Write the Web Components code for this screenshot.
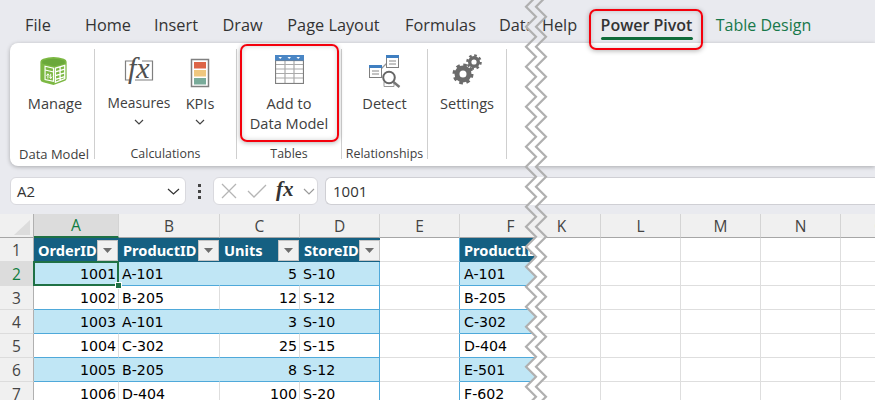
<!DOCTYPE html>
<html lang="en">
<head>
<meta charset="utf-8">
<title>Power Pivot</title>
<style>
  html, body { margin: 0; height: 400px; overflow: hidden; background: #e9eaef; }
  body { position: relative; font-family: "Open Sans", "Liberation Sans", sans-serif; color: #333; }
</style>
</head>
<body>
<xl-tabs>
  <xl-tab w="60">File</xl-tab>
  <xl-tab w="80">Home</xl-tab>
  <xl-tab w="56">Insert</xl-tab>
  <xl-tab w="77">Draw</xl-tab>
  <xl-tab w="105">Page Layout</xl-tab>
  <xl-tab w="109">Formulas</xl-tab>
  <xl-tab w="34" clip>Data</xl-tab>
  <xl-tab w="61">Help</xl-tab>
  <xl-tab w="113" active>Power Pivot<xl-callout style="--t:9px;--r:0;--b:-7px;--l:-1px"></xl-callout></xl-tab>
  <xl-tab w="121" contextual>Table Design</xl-tab>
</xl-tabs>

<xl-ribbon>
  <xl-group label="Data Model" w="85" style="--pad:5px;--label-pad:4px;--label-size:13px">
    <xl-button w="80" style="--icon-shift:-3px;--icon-pb:7px">
      <svg slot="icon" width="29" height="30" viewBox="0 0 30 32">
        <path d="M1 6 Q1 4 4 3 Q15 -1 26 3 Q29 4 29 6 V24 Q29 26 26 27 L15 31 L4 28 Q1 27 1 25 Z" fill="#7cb843"/>
        <path d="M3 8 L16 11 L27 8 V5 Q15 1 3 5 Z" fill="#6aa83a"/>
        <path d="M6 11 L15 13 V27 L6 25 Z" fill="none" stroke="#fff" stroke-width="1.2"/>
        <path d="M6 15 L15 17" stroke="#fff" stroke-width="1.2"/>
        <path d="M9 24 V19 M9 19 l-1.5 2 M9 19 l1.5 2 M12 19 V24 M12 24 l-1.5 -2 M12 24 l1.5 -2" fill="none" stroke="#fff" stroke-width="1"/>
        <path d="M17 13 L27 10 V24 L17 28 Z M17 17 L27 14 M17 21 L27 18 M17 25 L27 22 M22 12 V26" fill="none" stroke="#fff" stroke-width="1.4"/>
      </svg>
      Manage
    </xl-button>
  </xl-group>
  <xl-group label="Calculations" w="142">
    <xl-button w="88" chevron style="--btn-size:13.8px">
      <svg slot="icon" width="36" height="34" viewBox="0 0 36 34" overflow="visible">
        <path d="M14 7 H4.5 V26 H9 M21 7 H31.5 V26 H14" fill="none" stroke="#7f7f7f" stroke-width="1.2"/>
        <text x="7" y="24" font-family="Liberation Serif, serif" font-style="italic" font-size="30" fill="#505050">fx</text>
      </svg>
      Measures
    </xl-button>
    <xl-button w="34" chevron>
      <svg slot="icon" width="20" height="30" viewBox="0 0 20 30">
        <rect x="1.5" y="1.5" width="17" height="27" fill="#fff" stroke="#808080" stroke-width="1.5"/>
        <rect x="4" y="4" width="12" height="6.5" fill="#dd6548"/>
        <rect x="4" y="12" width="12" height="6.5" fill="#efc77f"/>
        <rect x="4" y="20" width="12" height="6.5" fill="#79ab9a"/>
      </svg>
      KPIs
    </xl-button>
  </xl-group>
  <xl-group label="Tables" w="105">
    <xl-button w="104" style="--icon-pb:9px">
      <svg slot="icon" width="29" height="29" viewBox="0 0 29 29">
        <rect x=".5" y=".5" width="28" height="28" fill="#fff"/>
        <path d="M1 9.5 H28 M1 14 H28 M1 18.5 H28 M1 23 H28 M10 5 V28 M19 5 V28" stroke="#aaa" stroke-width="1.2" fill="none"/>
        <rect x=".5" y="5.5" width="28" height="23" fill="none" stroke="#7f7f7f" stroke-width="1.2"/>
        <rect y="0" width="29" height="5.5" fill="#4a86c5"/>
        <path d="M3.5 2 H7 L5.2 4 Z M12.5 2 H16 L14.2 4 Z M21.5 2 H25 L23.2 4 Z" fill="#fff"/>
      </svg>
      Add to<br>Data Model
      <xl-callout style="--t:-5px;--r:2px;--b:3px;--l:3px"></xl-callout>
    </xl-button>
  </xl-group>
  <xl-group label="Relationships" w="86" style="--label-pad:0">
    <xl-button w="85">
      <svg slot="icon" width="34" height="33" viewBox="0 0 34 33">
        <path d="M12 15 L20 7" stroke="#999" stroke-width="1.2"/>
        <rect x="18.5" y=".5" width="12" height="12" fill="#fff" stroke="#7f7f7f"/>
        <rect x="18" y="0" width="13" height="3" fill="#3f7fc1"/>
        <path d="M21 6 H28 M21 9 H28" stroke="#888"/>
        <rect x="1.5" y="10.5" width="12" height="12" fill="#fff" stroke="#7f7f7f"/>
        <rect x="1" y="10" width="13" height="3" fill="#3f7fc1"/>
        <path d="M4 16 H11 M4 19 H11" stroke="#888"/>
        <path d="M16 26.5 H26 V31.5 H16 Z" fill="#fff" stroke="#999"/>
        <circle cx="21" cy="22.5" r="5.8" fill="#fff" stroke="#666" stroke-width="2"/>
        <path d="M25.5 27 L31.5 32" stroke="#777" stroke-width="2.4"/>
      </svg>
      Detect
    </xl-button>
  </xl-group>
  <xl-group label="" w="79">
    <xl-button w="78" style="--icon-pb:8px">
      <svg slot="icon" width="30" height="31" viewBox="0 0 30 31">
        <g fill="none" stroke="#6b6b6b">
          <circle cx="11" cy="20" r="9" stroke-width="3" stroke-dasharray="3.6 3.47"/>
          <circle cx="11" cy="20" r="6" stroke-width="5"/>
          <circle cx="22" cy="8" r="6.6" stroke-width="2.4" stroke-dasharray="2.6 2.58"/>
          <circle cx="22" cy="8" r="4.3" stroke-width="3.4"/>
        </g>
      </svg>
      Settings
    </xl-button>
  </xl-group>
</xl-ribbon>

<xl-formula-bar cell="A2" value="1001"></xl-formula-bar>
<xl-sheet></xl-sheet>
<xl-tear></xl-tear>

<script>
class XlTabs extends HTMLElement {
  constructor() {
    super();
    this.attachShadow({ mode: 'open' });
    this.shadowRoot.innerHTML = `
      <style>
        :host { display: flex; height: 43px; padding-left: 8px; box-sizing: border-box; }
      </style>
      <slot></slot>`;
  }
}

class XlTab extends HTMLElement {
  connectedCallback() {
    if (this.shadowRoot) return;
    this.attachShadow({ mode: 'open' });
    const w = this.getAttribute('w');
    this.shadowRoot.innerHTML = `
      <style>
        :host {
          display: block; position: relative; flex: none; width: ${w}px; height: 43px;
          text-align: center; line-height: 50px; font-size: 16.3px; color: #333; white-space: nowrap;
        }
        :host([clip]) { text-align: left; padding-left: 4px; box-sizing: border-box; }
        :host([active]) { font-weight: 600; font-size: 16px; }
        :host([contextual]) { color: #17784a; font-size: 16px; }
        .line { display: none; }
        :host([active]) .line {
          display: block; position: absolute; left: 11px; width: 92px; top: 37px; height: 3px;
          background: #0f6b3a; border-radius: 2px;
        }
      </style>
      <slot></slot><div class="line"></div>`;
  }
}

class XlCallout extends HTMLElement {
  constructor() {
    super();
    this.attachShadow({ mode: 'open' });
    this.shadowRoot.innerHTML = `
      <style>
        :host {
          display: block; position: absolute; z-index: 5; pointer-events: none; box-sizing: border-box;
          top: var(--t); right: var(--r); bottom: var(--b); left: var(--l);
          border: 2px solid #f4000c; border-radius: 7px;
          box-shadow: 0 1px 5px rgba(0,0,0,.3), inset 0 0 5px rgba(0,0,0,.18);
        }
      </style>`;
  }
}

class XlRibbon extends HTMLElement {
  constructor() {
    super();
    this.attachShadow({ mode: 'open' });
    this.shadowRoot.innerHTML = `
      <style>
        :host {
          display: flex; height: 123px; margin-left: 10px; box-sizing: border-box;
          background: #fff; border-radius: 8px 0 0 8px;
          box-shadow: 0 1px 4px rgba(0,0,0,.28);
        }
      </style>
      <slot></slot>`;
  }
}

class XlGroup extends HTMLElement {
  connectedCallback() {
    if (this.shadowRoot) return;
    this.attachShadow({ mode: 'open' });
    this.shadowRoot.innerHTML = `
      <style>
        :host {
          display: flex; flex-direction: column; flex: none; box-sizing: border-box;
          width: ${this.getAttribute('w')}px; height: 110px; margin-top: 6px;
          border-right: 1px solid #cfcfcf;
        }
        .content { display: flex; height: 96px; padding-left: var(--pad, 0); }
        .label {
          height: 14px; line-height: 18px; font-size: var(--label-size, 12.4px); color: #404040; text-align: center;
          padding-left: var(--label-pad, 0); white-space: nowrap;
        }
      </style>
      <div class="content"><slot></slot></div>
      <div class="label">${this.getAttribute('label') || ''}</div>`;
  }
}

class XlButton extends HTMLElement {
  connectedCallback() {
    if (this.shadowRoot) return;
    this.attachShadow({ mode: 'open' });
    const chevron = this.hasAttribute('chevron')
      ? `<svg class="chev" width="10" height="6" viewBox="0 0 10 6"><path d="M1 1 L5 5 L9 1" fill="none" stroke="#444" stroke-width="1.2"/></svg>`
      : '';
    this.shadowRoot.innerHTML = `
      <style>
        :host {
          display: flex; flex-direction: column; align-items: center; flex: none; position: relative;
          width: ${this.getAttribute('w')}px; font-size: var(--btn-size, 14.6px); line-height: 20px; color: #404040; text-align: center;
        }
        .icon {
          height: 44px; display: flex; align-items: flex-end; justify-content: center;
          padding-bottom: var(--icon-pb, 5px); box-sizing: border-box; margin-left: var(--icon-shift, 0);
        }
        .chev { margin-top: 6px; }
        .text { white-space: nowrap; }
      </style>
      <div class="icon"><slot name="icon"></slot></div>
      <div class="text"><slot></slot></div>
      ${chevron}`;
  }
}

class XlFormulaBar extends HTMLElement {
  connectedCallback() {
    if (this.shadowRoot) return;
    this.attachShadow({ mode: 'open' });
    this.shadowRoot.innerHTML = `
      <style>
        :host {
          display: flex; align-items: stretch; height: 28px; margin: 11px 0 9px 10px; font-size: 15px; color: #333;
        }
        .box { background: #fff; border: 1px solid #d9d9de; border-radius: 6px; box-sizing: border-box; display: flex; align-items: center; }
        .name { width: 176px; padding: 0 5px 0 6px; justify-content: space-between; }
        .dots { width: 27px; display: flex; flex-direction: column; align-items: center; justify-content: center; gap: 3px; }
        .dots i { width: 3px; height: 3px; background: #444; display: block; }
        .fx { width: 105px; padding: 0 2px 0 7px; justify-content: space-between; }
        .fx b { font: italic 700 21px "Liberation Serif", serif; color: #333; margin-top: -3px; }
        .input {
          flex: 1; margin-left: 7px; padding-left: 7px; border-right: none;
          border-radius: 6px 0 0 6px; border-color: #cfcfd4;
        }
      </style>
      <div class="box name"><span>${this.getAttribute('cell')}</span>
        <svg width="13" height="7" viewBox="0 0 13 7"><path d="M1 1 L6.5 6 L12 1" fill="none" stroke="#333" stroke-width="1.2"/></svg></div>
      <div class="dots"><i></i><i></i><i></i></div>
      <div class="box fx">
        <svg width="16" height="16" viewBox="0 0 16 16"><path d="M1 1 L15 15 M15 1 L1 15" stroke="#b5b5b5" stroke-width="1.3"/></svg>
        <svg width="20" height="16" viewBox="0 0 20 16"><path d="M1 8 L7 14 L19 2" fill="none" stroke="#b5b5b5" stroke-width="1.3"/></svg>
        <b>fx</b>
        <svg width="12" height="7" viewBox="0 0 12 7"><path d="M1 1 L6 6 L11 1" fill="none" stroke="#9a9a9a" stroke-width="1.2"/></svg>
      </div>
      <div class="box input">${this.getAttribute('value')}</div>`;
  }
}

class XlSheet extends HTMLElement {
  constructor() {
    super();
    this.attachShadow({ mode: 'open' });
    // F and K share the tear: F runs under the band, K only shows its right part
    this.columns = [['A',85],['B',101],['C',80],['D',80],['E',80],['F',76],['K',65],['L',80],['M',80],['N',80],['O',80]];
    this.orders = [
      [1001,'A-101',5,'S-10'],[1002,'B-205',12,'S-12'],[1003,'A-101',3,'S-10'],
      [1004,'C-302',25,'S-15'],[1005,'B-205',8,'S-12'],[1006,'D-404',100,'S-20']
    ];
    this.products = ['A-101','B-205','C-302','D-404','E-501','F-602'];
    this.render();
  }

  render() {
    const cols = this.columns.map(c => c[1] + 'px').join(' ');
    const funnel = `<span class="filter"><svg width="9" height="5" viewBox="0 0 9 5"><path d="M0 0 H9 L4.5 5 Z" fill="#6e6e6e"/></svg></span>`;
    let html = `<div class="corner"><svg width="16" height="15" viewBox="0 0 16 15"><path d="M16 0 V15 H0 Z" fill="#dcdcdc"/></svg></div>`;
    this.columns.forEach(([name]) => {
      html += `<div class="colhead col${name}"><span>${name}</span></div>`;
    });

    for (let r = 1; r <= 7; r++) {
      html += `<div class="rowhead${r === 2 ? ' on' : ''}">${r}</div>`;
      const order = this.orders[r - 2];
      const stripe = r % 2 === 0 ? ' stripe' : '';
      if (r === 1) {
        ['OrderID', 'ProductID', 'Units', 'StoreID'].forEach(t => {
          html += `<div class="cell th"><span>${t}</span>${funnel}</div>`;
        });
        html += `<div class="cell before-table"></div><div class="cell th left"><span>ProductID</span></div>`;
      } else {
        html += `<div class="cell num tb${stripe}${r === 2 ? ' sel' : ''}">${order[0]}</div>`;
        html += `<div class="cell tb${stripe}">${order[1]}</div>`;
        html += `<div class="cell num tb${stripe}">${order[2]}</div>`;
        html += `<div class="cell tb end${stripe}">${order[3]}</div>`;
        html += `<div class="cell before-table"></div>`;
        html += `<div class="cell tb left${stripe}">${this.products[r - 2]}</div>`;
      }
      for (let k = 0; k < 5; k++) html += `<div class="cell"></div>`;
    }

    this.shadowRoot.innerHTML = `
      <style>
        :host {
          display: grid; grid-template-columns: 34px ${cols}; grid-auto-rows: 24px;
          height: 186px; overflow: hidden; background: #fff; color: #000;
          font-family: "DejaVu Sans", sans-serif; font-size: 14.2px;
        }
        .corner, .colhead, .rowhead {
          background: #f0f0f0; font-family: "Open Sans", sans-serif; font-size: 15.5px; color: #444;
          display: flex; align-items: center; justify-content: center; box-sizing: border-box;
        }
        .corner { border-right: 1px solid #b0b0b0; border-bottom: 1px solid #a6a6a6; justify-content: flex-end; align-items: flex-end; padding: 0 3px 2px 0; }
        .colhead { border-right: 1px solid #d4d4d4; border-bottom: 1px solid #a6a6a6; overflow: hidden; }
        .colF { justify-content: flex-start; border-right: none; }
        .colF span { flex: none; width: 101px; text-align: center; }
        .colK { padding-right: 13px; }
        .colA { background: #dcdcdc; color: #107c41; border-bottom: 2px solid #1f7145; }
        .rowhead { border-right: 1px solid #b0b0b0; border-bottom: 1px solid #dcdcdc; }
        .rowhead.on { background: #dcdcdc; color: #107c41; }
        .cell {
          box-sizing: border-box; border-right: 1px solid #dedede; border-bottom: 1px solid #dedede;
          padding: 0 2px 0 3px; line-height: 25px; white-space: nowrap; overflow: hidden; position: relative;
        }
        .num { text-align: right; }
        .th {
          background: #156082; color: #fff; font: 700 14.6px "Noto Sans", sans-serif; border: none;
          display: flex; align-items: center; justify-content: space-between; padding: 0 1px 0 4px;
        }
        .th.left { overflow: hidden; }
        .th span { flex: none; }
        .filter {
          flex: none; width: 21px; height: 21px; box-sizing: border-box; background: #f1f1f1; border: 1px solid #c4c4c4;
          display: flex; align-items: center; justify-content: center;
        }
        .tb { border-bottom-color: #4fa9da; }
        .stripe { background: #c0e6f5; border-right-color: transparent; }
        .end, .before-table { border-right-color: #4fa9da; }
        .left { padding-left: 4px; border-right: none; }
        .sel { overflow: visible; z-index: 2; }
        .sel::after {
          content: ''; position: absolute; inset: -1px; border: 2px solid #1f7145; pointer-events: none;
        }
        .sel::before {
          content: ''; position: absolute; right: -4px; bottom: -4px; width: 5px; height: 5px; z-index: 3;
          background: #1f7145; border: 1px solid #fff;
        }
      </style>
      ${html}`;
  }
}

// torn-paper band drawn over the page where the two screen parts were joined
class XlTear extends HTMLElement {
  constructor() {
    super();
    this.attachShadow({ mode: 'open' });
    const left = [], right = [];
    for (let i = -2; i < 42; i++) {
      const y = i * 10 + 16.7;
      left.push([(i % 2 ? 6 : 16), y]);
      right.push([(i % 2 ? 16 : 26), y]);
    }
    const pts = a => a.map(p => p[0] + ' ' + p[1].toFixed(1)).join(' L');
    const band = 'M' + pts(left) + ' L' + pts(right.slice().reverse()) + ' Z';
    const stops = [[0,'#e9eaef'],[43,'#fff'],[166,'#e9eaef'],[177,'#fff'],[205,'#e9eaef'],[214,'#f0f0f0'],[238,'#fff'],[400,'#fff']];
    let grad = '';
    stops.forEach(([y, c], i) => {
      const end = i + 1 < stops.length ? stops[i + 1][0] : 400;
      grad += `<stop offset="${y / 400}" stop-color="${c}"/><stop offset="${end / 400}" stop-color="${c}"/>`;
    });
    this.shadowRoot.innerHTML = `
      <style>
        :host { display: block; position: absolute; left: 520px; top: 0; width: 32px; height: 400px; z-index: 9; pointer-events: none; }
        svg { display: block; }
      </style>
      <svg width="32" height="400" viewBox="0 0 32 400">
        <defs><linearGradient id="bg" gradientUnits="userSpaceOnUse" x1="0" y1="0" x2="0" y2="400">${grad}</linearGradient></defs>
        <path d="${band}" fill="url(#bg)"/>
        <path d="M${pts(left)}" fill="none" stroke="#b0b0b0" stroke-width="2.2"/>
        <path d="M${pts(right)}" fill="none" stroke="#b0b0b0" stroke-width="2.2"/>
      </svg>`;
  }
}

customElements.define('xl-tabs', XlTabs);
customElements.define('xl-tab', XlTab);
customElements.define('xl-callout', XlCallout);
customElements.define('xl-ribbon', XlRibbon);
customElements.define('xl-group', XlGroup);
customElements.define('xl-button', XlButton);
customElements.define('xl-formula-bar', XlFormulaBar);
customElements.define('xl-sheet', XlSheet);
customElements.define('xl-tear', XlTear);
</script>
</body>
</html>
